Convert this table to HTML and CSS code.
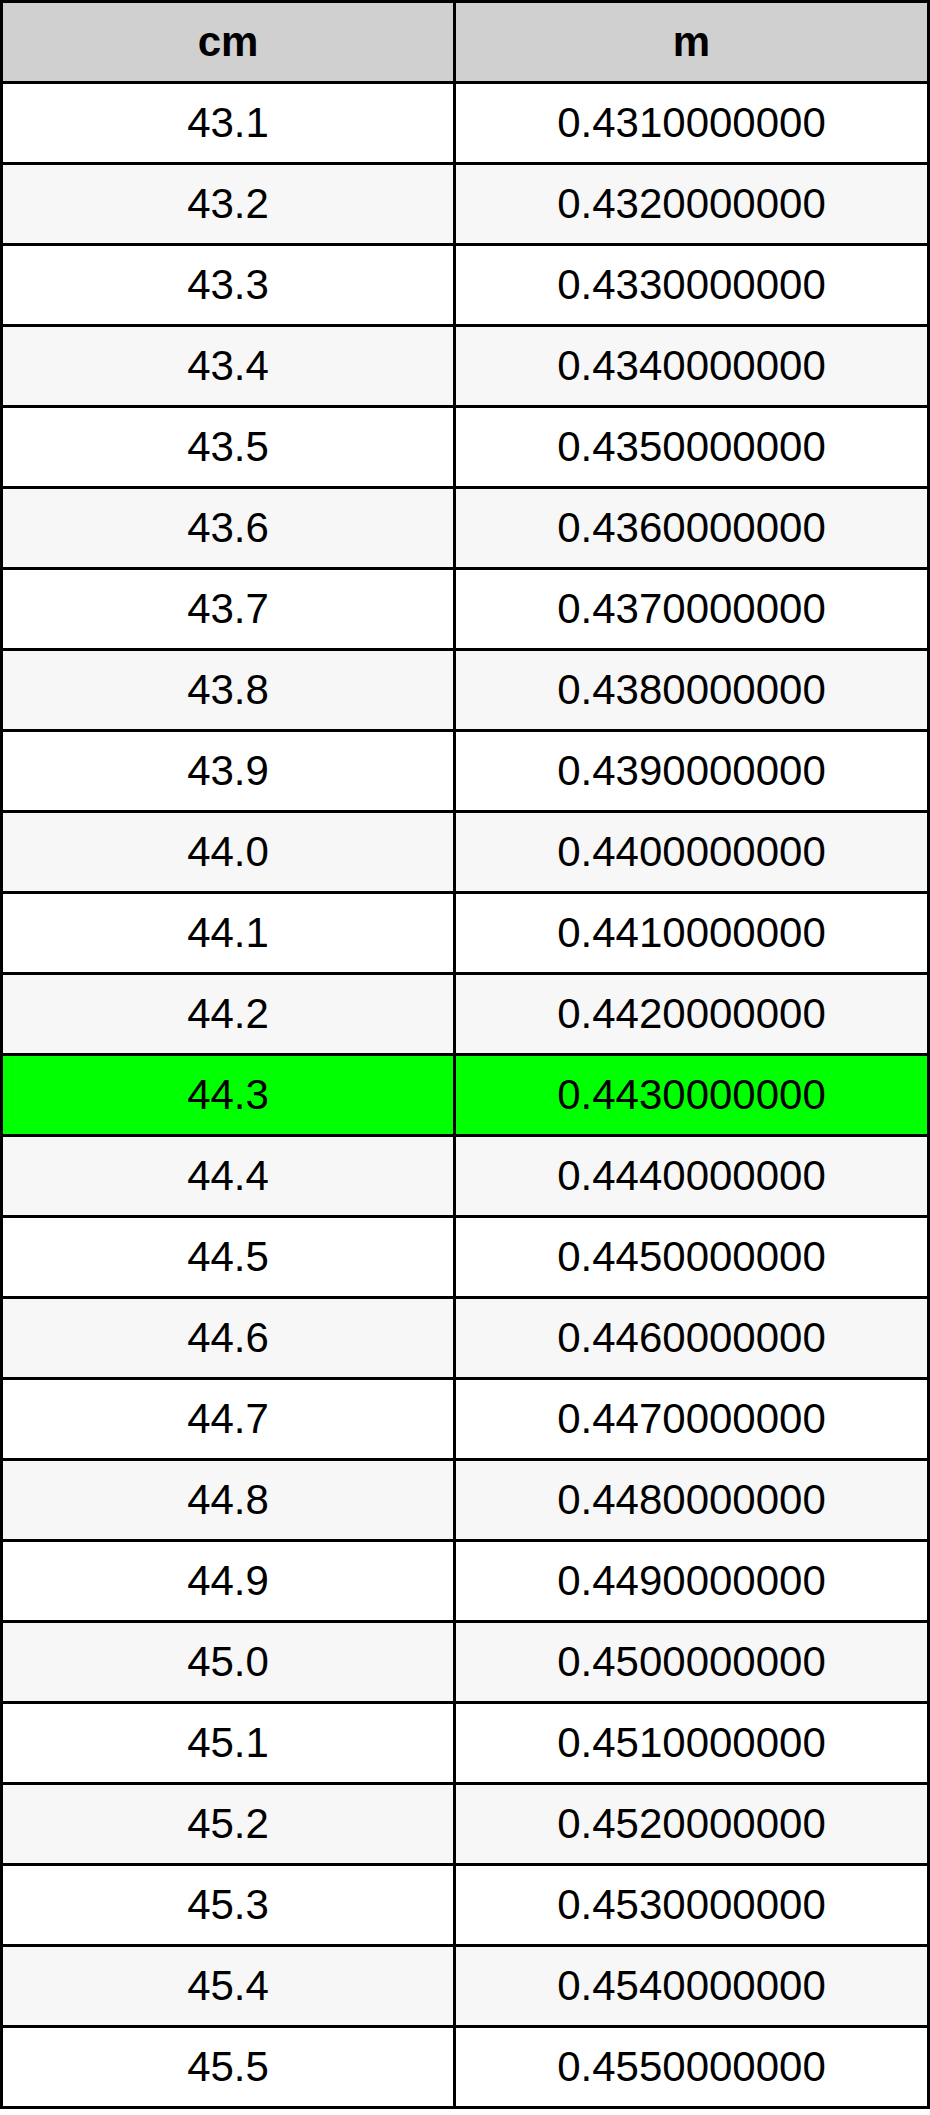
FILE: index.html
```html
<!DOCTYPE html>
<html lang="en">
<head>
<meta charset="utf-8">
<title>cm to m</title>
<link rel="stylesheet" href="styles.css">
</head>
<body>
<table class="conv">
  <thead>
    <tr><th class="c1">cm</th><th class="c2">m</th></tr>
  </thead>
  <tbody>
    <tr><td>43.1</td><td>0.4310000000</td></tr>
    <tr class="alt"><td>43.2</td><td>0.4320000000</td></tr>
    <tr><td>43.3</td><td>0.4330000000</td></tr>
    <tr class="alt"><td>43.4</td><td>0.4340000000</td></tr>
    <tr><td>43.5</td><td>0.4350000000</td></tr>
    <tr class="alt"><td>43.6</td><td>0.4360000000</td></tr>
    <tr><td>43.7</td><td>0.4370000000</td></tr>
    <tr class="alt"><td>43.8</td><td>0.4380000000</td></tr>
    <tr><td>43.9</td><td>0.4390000000</td></tr>
    <tr class="alt"><td>44.0</td><td>0.4400000000</td></tr>
    <tr><td>44.1</td><td>0.4410000000</td></tr>
    <tr class="alt"><td>44.2</td><td>0.4420000000</td></tr>
    <tr class="hl"><td>44.3</td><td>0.4430000000</td></tr>
    <tr class="alt"><td>44.4</td><td>0.4440000000</td></tr>
    <tr><td>44.5</td><td>0.4450000000</td></tr>
    <tr class="alt"><td>44.6</td><td>0.4460000000</td></tr>
    <tr><td>44.7</td><td>0.4470000000</td></tr>
    <tr class="alt"><td>44.8</td><td>0.4480000000</td></tr>
    <tr><td>44.9</td><td>0.4490000000</td></tr>
    <tr class="alt"><td>45.0</td><td>0.4500000000</td></tr>
    <tr><td>45.1</td><td>0.4510000000</td></tr>
    <tr class="alt"><td>45.2</td><td>0.4520000000</td></tr>
    <tr><td>45.3</td><td>0.4530000000</td></tr>
    <tr class="alt"><td>45.4</td><td>0.4540000000</td></tr>
    <tr><td>45.5</td><td>0.4550000000</td></tr>
  </tbody>
</table>
</body>
</html>
```

FILE: styles.css
```css
html, body {
  margin: 0;
  padding: 0;
  background: #ffffff;
}

.conv {
  width: 930px;
  table-layout: fixed;
  border-collapse: separate;
  border-spacing: 0;
  border-top: 3px solid #000;
  border-left: 3px solid #000;
  box-sizing: border-box;
  font-family: "Liberation Sans", Arial, Helvetica, sans-serif;
  font-size: 42px;
  color: #000;
}

.conv th,
.conv td {
  box-sizing: border-box;
  height: 81px;
  padding: 0;
  border-right: 3px solid #000;
  border-bottom: 3px solid #000;
  text-align: center;
  vertical-align: middle;
  line-height: 1;
}

.conv th {
  background: #d0d0d0;
  font-weight: bold;
}

.conv .c1 {
  width: 453px;
}

.conv .c2 {
  width: 474px;
}

.conv td {
  background: #ffffff;
  font-weight: normal;
}

.conv tr.alt td {
  background: #f7f7f7;
}

.conv tr.hl td {
  background: #00ff00;
}
```
